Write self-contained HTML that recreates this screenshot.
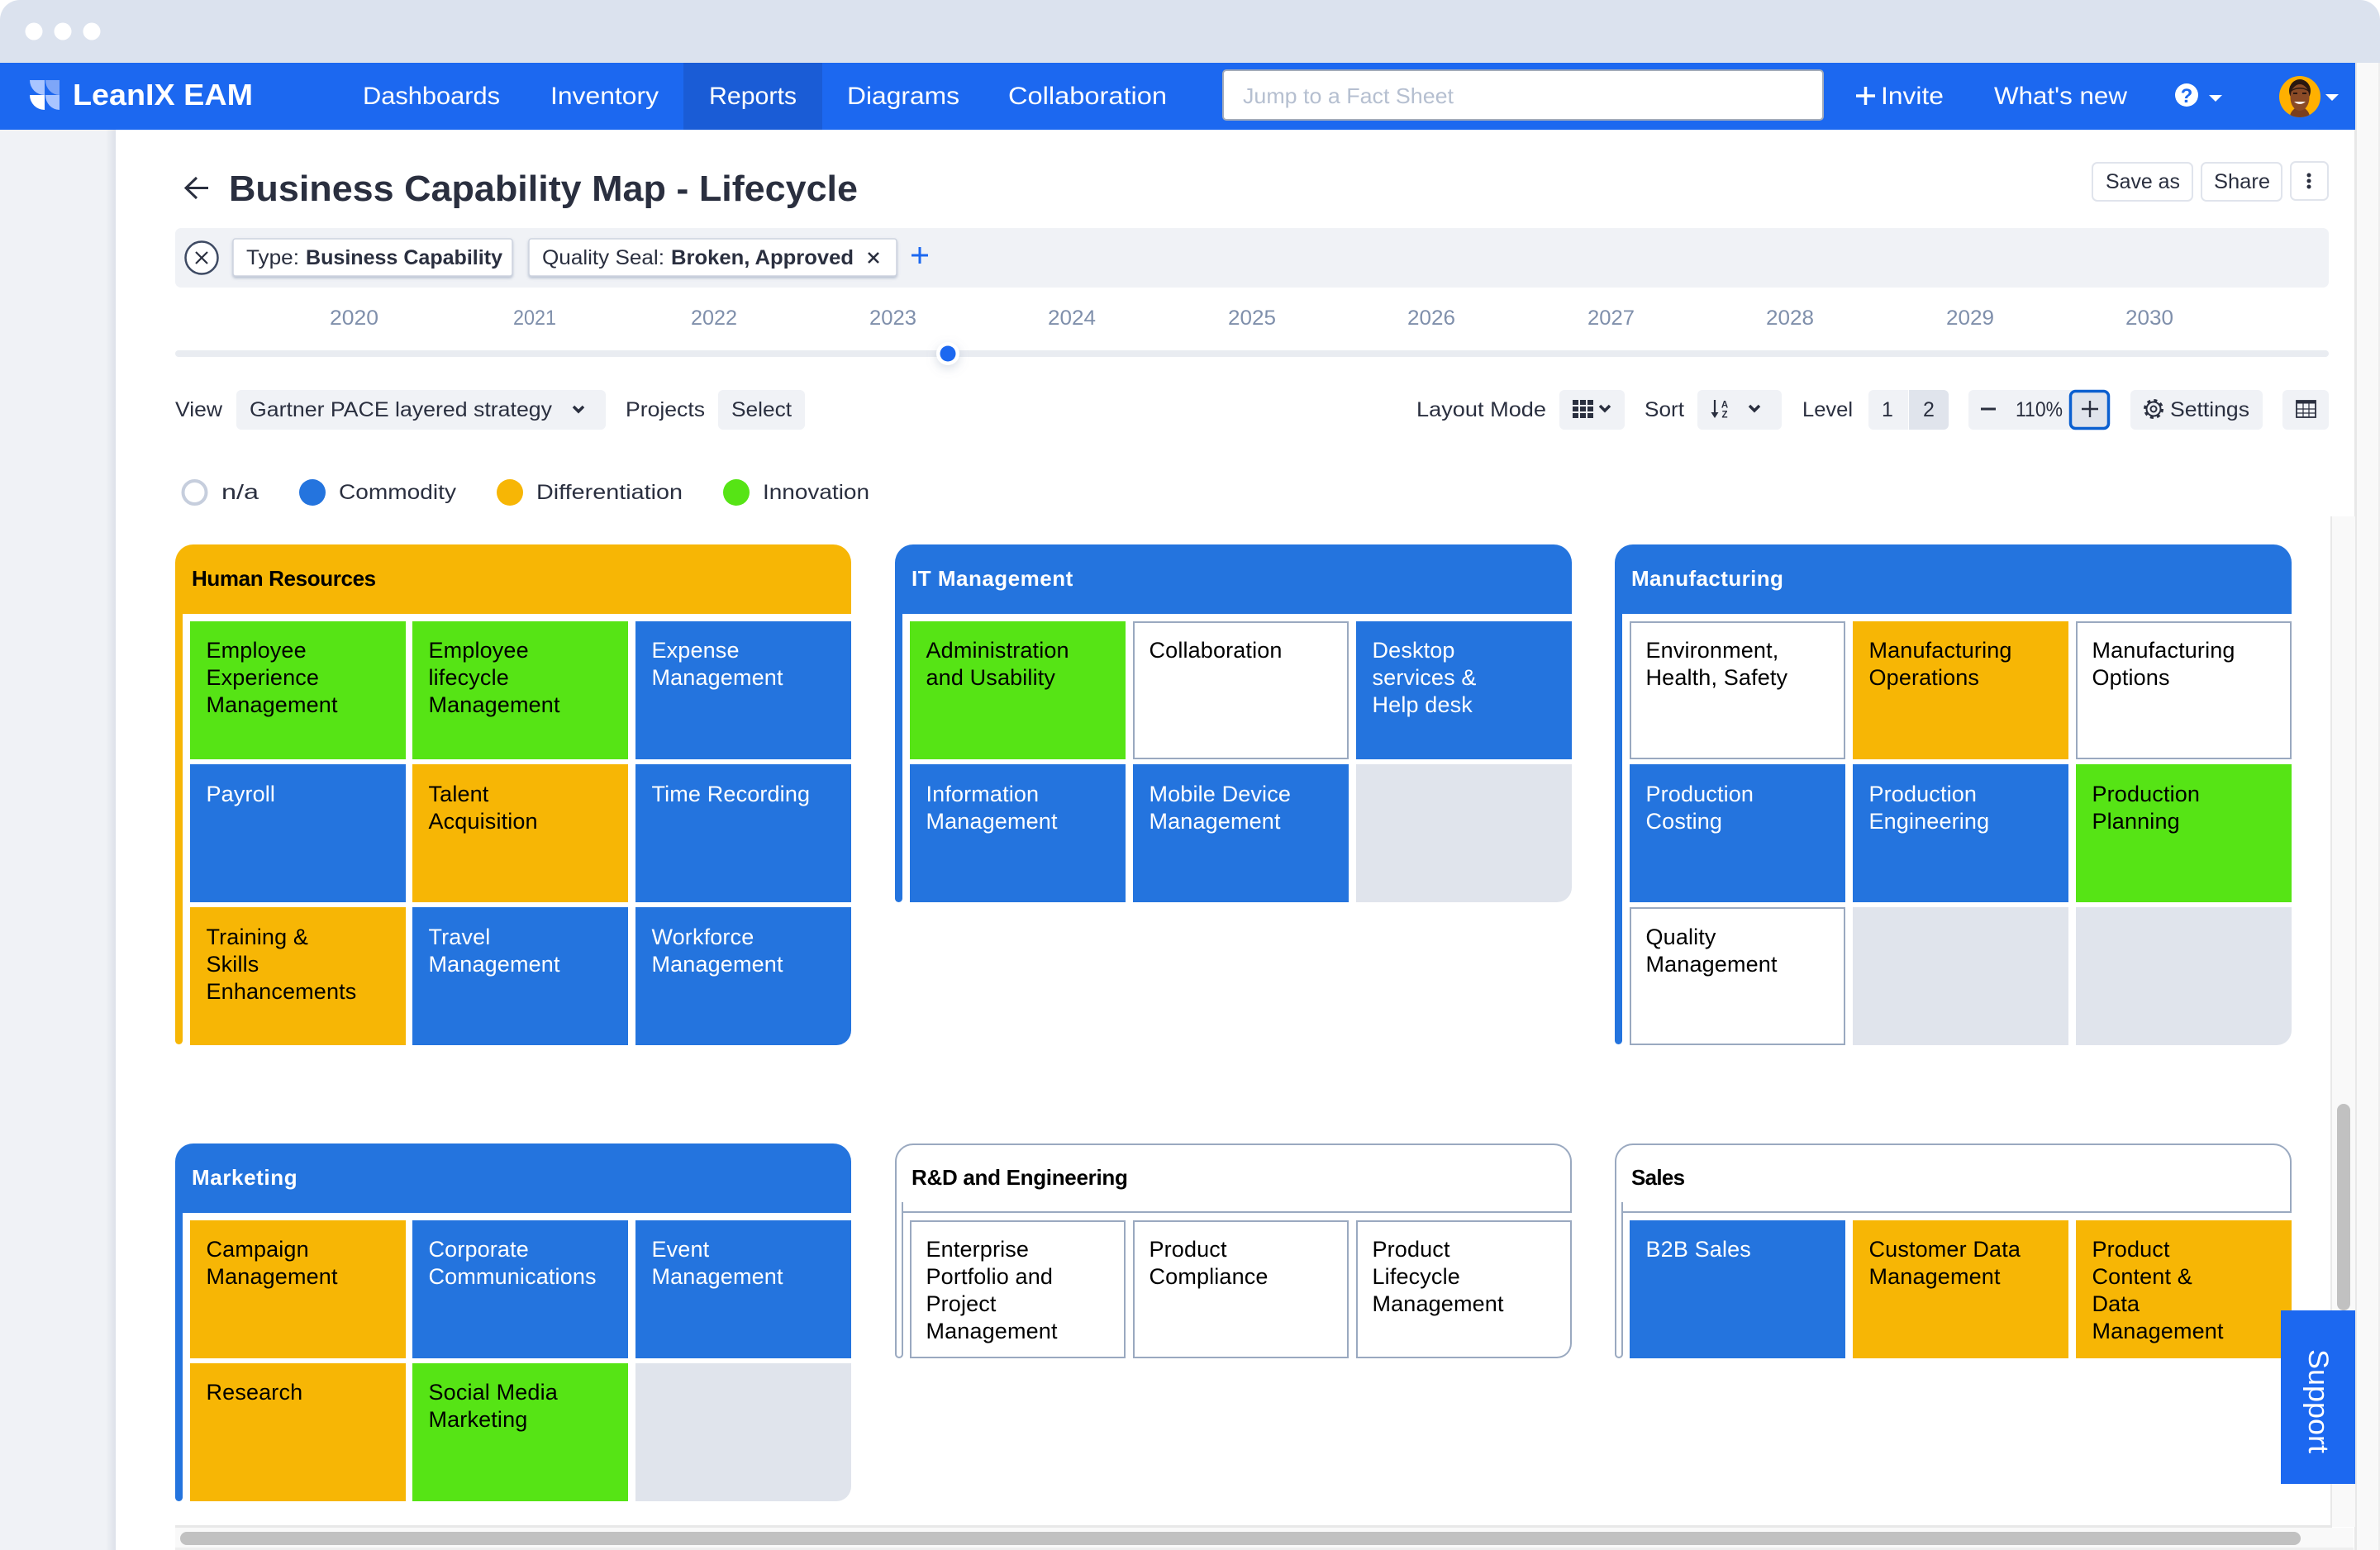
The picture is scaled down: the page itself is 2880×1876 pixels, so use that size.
<!DOCTYPE html>
<html lang="en">
<head>
<meta charset="utf-8">
<title>Business Capability Map - Lifecycle</title>
<style>
html,body{margin:0;padding:0;background:#fff}
body{position:relative;width:2880px;height:1876px;overflow:hidden;font-family:"Liberation Sans",sans-serif}
svg{position:absolute;left:0;top:0;font-family:"Liberation Sans",sans-serif}
.d{fill:#2a2f3f;font-size:25px}
.w{fill:#fff;font-size:30px}
.b{font-weight:700}
.y{fill:#7f8fab;font-size:25px}
.g{position:absolute;width:818px}
.n{width:819px}
.h{position:absolute;left:0;top:0;width:100%;height:84px;border-radius:22px 22px 0 0;box-sizing:border-box;padding:26px 0 0 20px;font-size:26px;line-height:30px;font-weight:700}
.s{position:absolute;left:0;top:60px;bottom:0;width:9px;border-radius:0 0 5px 5px}
.t{position:absolute;width:261px;height:167px;box-sizing:border-box;padding:19px 0 0 19.5px;font-size:27px;letter-spacing:.15px;line-height:33px;white-space:nowrap;color:#000}
.c0{left:18px}.c1{left:287px}.c2{left:557px}
.n .c1{left:288px}.n .c2{left:558px}
.r0{top:93px}.r1{top:266px}.r2{top:439px}
.top .r1,.top .r2{padding-top:20px}
.A{background:#f7b605}.B{background:#2474de;color:#fff}.G{background:#56e415}.X{background:#e0e4ec}
.O{background:#fff;box-shadow:inset 0 0 0 2px #9aa9c0}
.br{border-bottom-right-radius:18px}
.hA{background:#f7b605;color:#000}.hB{background:#2474de;color:#fff}
.hO{background:#fff;color:#000;border:2px solid #9aa9c0;padding:24px 0 0 18px}
.sO{top:71px;width:10px;box-sizing:border-box;background:#fff;border:2px solid #9aa9c0;border-top:0;z-index:1}
#support{position:absolute;left:2760px;top:1586px;width:90px;height:210px;background:#1c68f0}
</style>
</head>
<body>
<svg width="2880" height="1876" viewBox="0 0 2880 1876">
  <defs>
    <linearGradient id="sh" x1="0" x2="1" y1="0" y2="0"><stop offset="0" stop-color="#f0f2f6"/><stop offset="1" stop-color="#dde1e9"/></linearGradient>
    <clipPath id="av"><circle cx="2783" cy="117" r="25"/></clipPath>
    <filter id="th" x="-100%" y="-100%" width="300%" height="300%"><feDropShadow dx="0" dy="4" stdDeviation="6" flood-color="#7f8fab" flood-opacity=".3"/></filter>
    <filter id="ch" x="-5%" y="-20%" width="110%" height="150%"><feDropShadow dx="0" dy="2" stdDeviation="1.5" flood-color="#7f8fab" flood-opacity=".5"/></filter>
  </defs>

  <!-- window chrome -->
  <path d="M0 76V24A24 24 0 0 1 24 0H2856A24 24 0 0 1 2880 24V76Z" fill="#dbe2ee"/>
  <circle cx="41" cy="38" r="10.5" fill="#fff"/>
  <circle cx="76" cy="38" r="10.5" fill="#fff"/>
  <circle cx="111" cy="38" r="10.5" fill="#fff"/>

  <!-- side areas -->
  <rect x="0" y="157" width="140" height="1719" fill="#f0f2f6"/>
  <rect x="128" y="157" width="12" height="1719" fill="url(#sh)"/>
  <rect x="2850" y="76" width="30" height="1800" fill="#f9f9f9"/>
  <rect x="2849" y="157" width="3" height="1719" fill="#e8e8e8"/>
  <rect x="2850" y="76" width="2" height="81" fill="#e8e8e8"/>
  <rect x="2878" y="76" width="2" height="1800" fill="#eeeeee"/>

  <!-- nav -->
  <rect x="0" y="76" width="2850" height="81" fill="#1c68f0"/>
  <rect x="827" y="76" width="168" height="81" fill="#1a5cd6"/>
  <path d="M36 97H54V115A18 18 0 0 1 36 97Z" fill="#a9c5ff"/>
  <path d="M55 97H72V115A17 18 0 0 1 55 97Z" fill="#7ea6f8"/>
  <path d="M36 115H54V133A18 18 0 0 1 36 115Z" fill="#fff"/>
  <path d="M55 115H72V133A17 18 0 0 1 55 115Z" fill="#a9c5ff"/>
  <text x="88" y="127" class="w b" style="font-size:36px" textLength="218" lengthAdjust="spacingAndGlyphs">LeanIX EAM</text>
  <text x="439" y="126" class="w" textLength="166" lengthAdjust="spacingAndGlyphs">Dashboards</text>
  <text x="666" y="126" class="w" textLength="131" lengthAdjust="spacingAndGlyphs">Inventory</text>
  <text x="858" y="126" class="w" textLength="106" lengthAdjust="spacingAndGlyphs">Reports</text>
  <text x="1025" y="126" class="w" textLength="136" lengthAdjust="spacingAndGlyphs">Diagrams</text>
  <text x="1220" y="126" class="w" textLength="192" lengthAdjust="spacingAndGlyphs">Collaboration</text>

  <rect x="1480" y="85" width="726" height="60" rx="4" fill="#fff" stroke="#a4acba" stroke-width="2"/>
  <text x="1504" y="125" style="font-size:26px;fill:#b5bfd0" textLength="255" lengthAdjust="spacingAndGlyphs">Jump to a Fact Sheet</text>

  <path d="M2246 116H2269M2257.5 105V127" stroke="#fff" stroke-width="3.5" fill="none"/>
  <text x="2276" y="126" class="w" textLength="76" lengthAdjust="spacingAndGlyphs">Invite</text>
  <text x="2413" y="126" class="w" textLength="161" lengthAdjust="spacingAndGlyphs">What's new</text>
  <circle cx="2646" cy="115" r="14" fill="#fff"/>
  <text x="2646" y="124" text-anchor="middle" style="font-size:24px;font-weight:700;fill:#1c68f0">?</text>
  <path d="M2673 115H2689L2681 123Z" fill="#fff"/>
  <circle cx="2783" cy="117" r="25" fill="#ffb000"/>
  <g clip-path="url(#av)">
    <path d="M2770 150C2770 136 2774 134 2777 131H2789C2792 134 2796 136 2796 150Z" fill="#7a3e1f"/>
    <ellipse cx="2783" cy="110" rx="13" ry="14" fill="#2a1710"/>
    <ellipse cx="2783" cy="118" rx="11.5" ry="16" fill="#8a4a26"/>
    <path d="M2771.5 112C2773 104 2793 104 2794.5 112C2790 106 2776 106 2771.5 112Z" fill="#2a1710"/>
    <rect x="2775" y="112" width="5" height="2" fill="#2a1710"/>
    <rect x="2786" y="112" width="5" height="2" fill="#2a1710"/>
    <path d="M2776 123Q2783 129 2790 123Z" fill="#f4eee8"/>
  </g>
  <path d="M2814 114H2830L2822 122Z" fill="#fff"/>

  <!-- title -->
  <path d="M252 227.5H226M238 215L225 227.5L238 240" stroke="#2a2f3f" stroke-width="3" fill="none"/>
  <text x="277" y="243" class="d b" style="font-size:44px" textLength="761" lengthAdjust="spacingAndGlyphs">Business Capability Map - Lifecycle</text>

  <rect x="2532" y="197" width="121" height="46" rx="6" fill="#fff" stroke="#e0e4ec" stroke-width="2"/>
  <text x="2548" y="228" class="d" textLength="90" lengthAdjust="spacingAndGlyphs">Save as</text>
  <rect x="2664" y="197" width="97" height="46" rx="6" fill="#fff" stroke="#e0e4ec" stroke-width="2"/>
  <text x="2679" y="228" class="d" textLength="68" lengthAdjust="spacingAndGlyphs">Share</text>
  <rect x="2772" y="196" width="45" height="46" rx="6" fill="#fff" stroke="#e0e4ec" stroke-width="2"/>
  <circle cx="2794" cy="212" r="2.5" fill="#2a2f3f"/><circle cx="2794" cy="219" r="2.5" fill="#2a2f3f"/><circle cx="2794" cy="226" r="2.5" fill="#2a2f3f"/>

  <!-- filter bar -->
  <rect x="212" y="276" width="2606" height="72" rx="7" fill="#f0f2f6"/>
  <circle cx="244" cy="312" r="19.5" fill="#fff" stroke="#3e4a63" stroke-width="2.5"/>
  <path d="M237 305L251 319M251 305L237 319" stroke="#2a2f3f" stroke-width="2.2"/>
  <rect x="282" y="289" width="338" height="45" rx="3" fill="#fff" stroke="#cdd3df" stroke-width="1.5" filter="url(#ch)"/>
  <text x="298" y="320" class="d" textLength="64" lengthAdjust="spacingAndGlyphs">Type:</text>
  <text x="370" y="320" class="d b" textLength="238" lengthAdjust="spacingAndGlyphs">Business Capability</text>
  <rect x="640" y="289" width="445" height="45" rx="3" fill="#fff" stroke="#cdd3df" stroke-width="1.5" filter="url(#ch)"/>
  <text x="656" y="320" class="d" textLength="148" lengthAdjust="spacingAndGlyphs">Quality Seal:</text>
  <text x="812" y="320" class="d b" textLength="221" lengthAdjust="spacingAndGlyphs">Broken, Approved</text>
  <path d="M1051 306L1063 318M1063 306L1051 318" stroke="#2a2f3f" stroke-width="2.6"/>
  <path d="M1103 309H1123M1113 299V319" stroke="#1c68f0" stroke-width="3"/>

  <!-- timeline -->
  <text x="399" y="393" class="y" textLength="59" lengthAdjust="spacingAndGlyphs">2020</text>
  <text x="621" y="393" class="y" textLength="52" lengthAdjust="spacingAndGlyphs">2021</text>
  <text x="836" y="393" class="y" textLength="56" lengthAdjust="spacingAndGlyphs">2022</text>
  <text x="1052" y="393" class="y" textLength="57" lengthAdjust="spacingAndGlyphs">2023</text>
  <text x="1268" y="393" class="y" textLength="58" lengthAdjust="spacingAndGlyphs">2024</text>
  <text x="1486" y="393" class="y" textLength="58" lengthAdjust="spacingAndGlyphs">2025</text>
  <text x="1703" y="393" class="y" textLength="58" lengthAdjust="spacingAndGlyphs">2026</text>
  <text x="1921" y="393" class="y" textLength="57" lengthAdjust="spacingAndGlyphs">2027</text>
  <text x="2137" y="393" class="y" textLength="58" lengthAdjust="spacingAndGlyphs">2028</text>
  <text x="2355" y="393" class="y" textLength="58" lengthAdjust="spacingAndGlyphs">2029</text>
  <text x="2572" y="393" class="y" textLength="58" lengthAdjust="spacingAndGlyphs">2030</text>
  <rect x="212" y="424" width="2606" height="8" rx="4" fill="#e9ecf1"/>
  <circle cx="1147" cy="428" r="14" fill="#fff" filter="url(#th)"/>
  <circle cx="1147" cy="428" r="9.5" fill="#1c68f0"/>

  <!-- view row -->
  <text x="212" y="504" class="d" textLength="57" lengthAdjust="spacingAndGlyphs">View</text>
  <rect x="286" y="472" width="447" height="48" rx="6" fill="#f0f2f6"/>
  <text x="302" y="504" class="d" textLength="366" lengthAdjust="spacingAndGlyphs">Gartner PACE layered strategy</text>
  <path d="M694 492L700 498L706 492" stroke="#2a2f3f" stroke-width="3.5" fill="none"/>
  <text x="757" y="504" class="d" textLength="96" lengthAdjust="spacingAndGlyphs">Projects</text>
  <rect x="869" y="472" width="105" height="48" rx="6" fill="#f0f2f6"/>
  <text x="885" y="504" class="d" textLength="73" lengthAdjust="spacingAndGlyphs">Select</text>

  <!-- right toolbar -->
  <text x="1714" y="504" class="d" textLength="157" lengthAdjust="spacingAndGlyphs">Layout Mode</text>
  <rect x="1887" y="472" width="79" height="48" rx="6" fill="#f0f2f6"/>
  <g fill="#2a2f3f">
    <rect x="1903" y="484" width="7" height="6"/><rect x="1912" y="484" width="7" height="6"/><rect x="1921" y="484" width="7" height="6"/>
    <rect x="1903" y="492" width="7" height="6"/><rect x="1912" y="492" width="7" height="6"/><rect x="1921" y="492" width="7" height="6"/>
    <rect x="1903" y="500" width="7" height="6"/><rect x="1912" y="500" width="7" height="6"/><rect x="1921" y="500" width="7" height="6"/>
  </g>
  <path d="M1936 491L1942 497L1948 491" stroke="#2a2f3f" stroke-width="3.5" fill="none"/>

  <text x="1990" y="504" class="d" textLength="48" lengthAdjust="spacingAndGlyphs">Sort</text>
  <rect x="2054" y="472" width="102" height="48" rx="6" fill="#f0f2f6"/>
  <path d="M2075 484V500" stroke="#2a2f3f" stroke-width="2.2" fill="none"/>
  <path d="M2070.5 499H2079.5L2075 506Z" fill="#2a2f3f"/>
  <text x="2087" y="493.5" text-anchor="middle" style="font-size:11.5px;font-weight:700;fill:#2a2f3f">A</text>
  <text x="2087" y="505.5" text-anchor="middle" style="font-size:11.5px;font-weight:700;fill:#2a2f3f">Z</text>
  <path d="M2117 491L2123 497L2129 491" stroke="#2a2f3f" stroke-width="3.5" fill="none"/>

  <text x="2181" y="504" class="d" textLength="61" lengthAdjust="spacingAndGlyphs">Level</text>
  <path d="M2309 472H2267A6 6 0 0 0 2261 478V514A6 6 0 0 0 2267 520H2309Z" fill="#f0f2f6"/>
  <path d="M2310 472H2352A6 6 0 0 1 2358 478V514A6 6 0 0 1 2352 520H2310Z" fill="#e0e4ec"/>
  <text x="2284" y="504" text-anchor="middle" class="d">1</text>
  <text x="2334" y="504" text-anchor="middle" class="d">2</text>

  <rect x="2382" y="472" width="171" height="48" rx="6" fill="#f0f2f6"/>
  <path d="M2397 495H2415" stroke="#2a2f3f" stroke-width="3"/>
  <text x="2439" y="504" class="d" textLength="57" lengthAdjust="spacingAndGlyphs">110%</text>
  <rect x="2505.5" y="473.5" width="46" height="45" rx="6" fill="#e0e4ec" stroke="#0a5fd0" stroke-width="3.5"/>
  <path d="M2519 495H2539M2529 485V505" stroke="#2a2f3f" stroke-width="2.4"/>

  <rect x="2578" y="472" width="160" height="48" rx="6" fill="#f0f2f6"/>
  <circle cx="2606" cy="495" r="8.5" fill="none" stroke="#2a2f3f" stroke-width="2"/>
  <circle cx="2606" cy="495" r="10.5" fill="none" stroke="#2a2f3f" stroke-width="3" stroke-dasharray="4 4.25"/>
  <circle cx="2606" cy="495" r="3.5" fill="none" stroke="#2a2f3f" stroke-width="2"/>
  <text x="2626" y="504" class="d" textLength="96" lengthAdjust="spacingAndGlyphs">Settings</text>

  <rect x="2762" y="472" width="56" height="48" rx="6" fill="#f0f2f6"/>
  <rect x="2779" y="485" width="23" height="20" fill="none" stroke="#2a2f3f" stroke-width="1.8"/>
  <path d="M2779 487H2802" stroke="#2a2f3f" stroke-width="3"/>
  <path d="M2779 495H2802M2779 500H2802M2787 487V505M2794 487V505" stroke="#2a2f3f" stroke-width="1.2"/>

  <!-- legend -->
  <circle cx="235.5" cy="596" r="14" fill="#fff" stroke="#c6cedd" stroke-width="4"/>
  <text x="268" y="604" class="d" textLength="45" lengthAdjust="spacingAndGlyphs">n/a</text>
  <circle cx="378" cy="596" r="16" fill="#2474de"/>
  <text x="410" y="604" class="d" textLength="142" lengthAdjust="spacingAndGlyphs">Commodity</text>
  <circle cx="617" cy="596" r="16" fill="#f7b605"/>
  <text x="649" y="604" class="d" textLength="177" lengthAdjust="spacingAndGlyphs">Differentiation</text>
  <circle cx="891" cy="596" r="16" fill="#56e415"/>
  <text x="923" y="604" class="d" textLength="129" lengthAdjust="spacingAndGlyphs">Innovation</text>

  <!-- scrollbars -->
  <rect x="2820" y="625" width="30" height="1223" fill="#f9f9f9"/>
  <rect x="2820" y="625" width="2" height="1224" fill="#e8e8e8"/>
  <rect x="2828" y="1336" width="16" height="250" rx="8" fill="#c1c1c1"/>
  <rect x="212" y="1849" width="2636" height="27" fill="#f9f9f9"/>
  <rect x="212" y="1846" width="2610" height="3" fill="#e8e8e8"/>
  <rect x="218" y="1854" width="2566" height="16" rx="8" fill="#c1c1c1"/>
  <rect x="212" y="1873" width="2636" height="3" fill="#eeeeee"/>
</svg>

<!-- Human Resources -->
<div class="g top" style="left:212px;top:659px;height:605px">
  <div class="s A"></div>
  <div class="h hA" style="letter-spacing:-.37px">Human Resources</div>
  <div class="t G c0 r0">Employee<br>Experience<br>Management</div>
  <div class="t G c1 r0">Employee<br>lifecycle<br>Management</div>
  <div class="t B c2 r0">Expense<br>Management</div>
  <div class="t B c0 r1">Payroll</div>
  <div class="t A c1 r1">Talent<br>Acquisition</div>
  <div class="t B c2 r1">Time Recording</div>
  <div class="t A c0 r2">Training &amp;<br>Skills<br>Enhancements</div>
  <div class="t B c1 r2">Travel<br>Management</div>
  <div class="t B c2 r2 br">Workforce<br>Management</div>
</div>

<!-- IT Management -->
<div class="g n top" style="left:1083px;top:659px;height:433px">
  <div class="s B"></div>
  <div class="h hB" style="letter-spacing:.5px">IT Management</div>
  <div class="t G c0 r0">Administration<br>and Usability</div>
  <div class="t O c1 r0">Collaboration</div>
  <div class="t B c2 r0">Desktop<br>services &amp;<br>Help desk</div>
  <div class="t B c0 r1">Information<br>Management</div>
  <div class="t B c1 r1">Mobile Device<br>Management</div>
  <div class="t X c2 r1 br"></div>
</div>

<!-- Manufacturing -->
<div class="g n top" style="left:1954px;top:659px;height:605px">
  <div class="s B"></div>
  <div class="h hB" style="letter-spacing:.4px">Manufacturing</div>
  <div class="t O c0 r0">Environment,<br>Health, Safety</div>
  <div class="t A c1 r0">Manufacturing<br>Operations</div>
  <div class="t O c2 r0">Manufacturing<br>Options</div>
  <div class="t B c0 r1">Production<br>Costing</div>
  <div class="t B c1 r1">Production<br>Engineering</div>
  <div class="t G c2 r1">Production<br>Planning</div>
  <div class="t O c0 r2">Quality<br>Management</div>
  <div class="t X c1 r2"></div>
  <div class="t X c2 r2 br"></div>
</div>

<!-- Marketing -->
<div class="g" style="left:212px;top:1384px;height:433px">
  <div class="s B"></div>
  <div class="h hB" style="letter-spacing:.6px">Marketing</div>
  <div class="t A c0 r0">Campaign<br>Management</div>
  <div class="t B c1 r0">Corporate<br>Communications</div>
  <div class="t B c2 r0">Event<br>Management</div>
  <div class="t A c0 r1">Research</div>
  <div class="t G c1 r1">Social Media<br>Marketing</div>
  <div class="t X c2 r1 br"></div>
</div>

<!-- R&D and Engineering -->
<div class="g n" style="left:1083px;top:1384px;height:260px">
  <div class="s sO"></div>
  <div class="h hO" style="background:transparent;letter-spacing:-.3px">R&amp;D and Engineering</div>
  <div class="t O c0 r0">Enterprise<br>Portfolio and<br>Project<br>Management</div>
  <div class="t O c1 r0">Product<br>Compliance</div>
  <div class="t O c2 r0 br">Product<br>Lifecycle<br>Management</div>
</div>

<!-- Sales -->
<div class="g n" style="left:1954px;top:1384px;height:260px">
  <div class="s sO"></div>
  <div class="h hO" style="background:transparent;letter-spacing:-.7px">Sales</div>
  <div class="t B c0 r0">B2B Sales</div>
  <div class="t A c1 r0">Customer Data<br>Management</div>
  <div class="t A c2 r0">Product<br>Content &amp;<br>Data<br>Management</div>
</div>

<!-- Support -->
<div id="support">
  <svg width="90" height="210" viewBox="0 0 90 210">
    <text transform="translate(34 47) rotate(90)" style="font-size:34px;fill:#fff" textLength="126" lengthAdjust="spacingAndGlyphs">Support</text>
  </svg>
</div>
</body>
</html>
